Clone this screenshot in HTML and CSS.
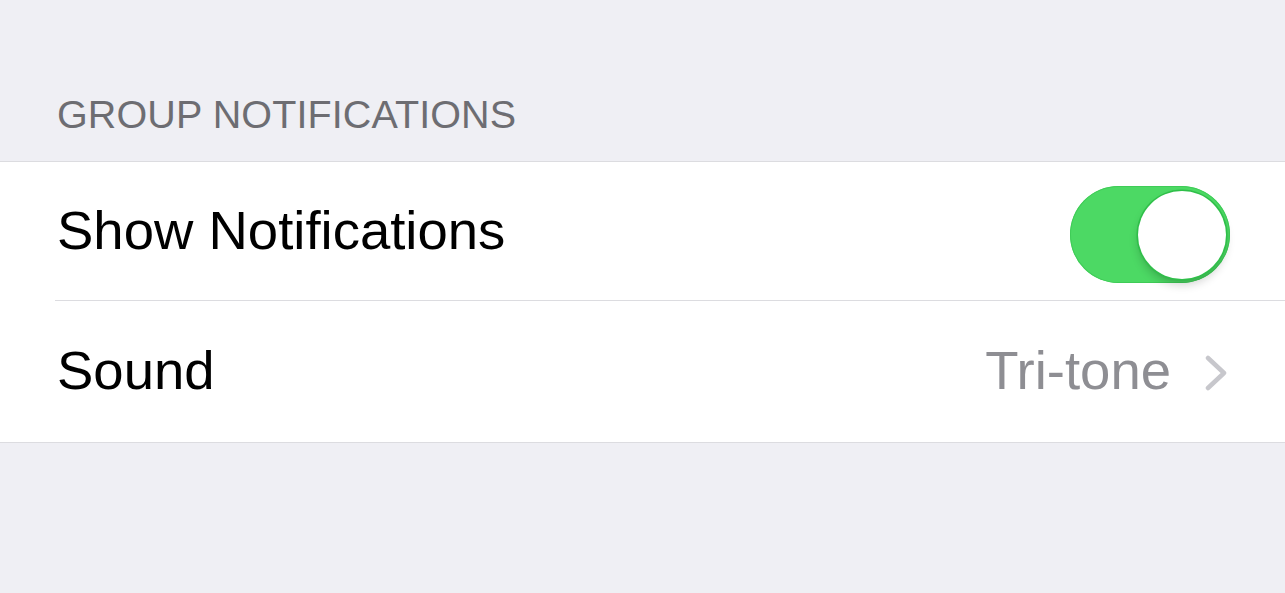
FILE: index.html
```html
<!DOCTYPE html>
<html lang="en">
<head>
<meta charset="utf-8">
<title>Group Notifications</title>
<link rel="stylesheet" href="styles.css">
</head>
<body>
  <div class="page">
    <div class="section-header">GROUP NOTIFICATIONS</div>
    <div class="group">
      <div class="row row-first">
        <span class="label">Show Notifications</span>
        <div class="toggle on"><span class="knob"></span></div>
      </div>
      <div class="row row-last">
        <span class="label">Sound</span>
        <span class="detail">
          <span class="value">Tri-tone</span>
          <svg class="chevron" width="24" height="36" viewBox="0 0 24 36" aria-hidden="true">
            <polyline points="4,3 20,18 4,33" fill="none" stroke="#c7c7cc" stroke-width="4.5" stroke-linecap="round" stroke-linejoin="round"/>
          </svg>
        </span>
      </div>
    </div>
  </div>
</body>
</html>
```

FILE: styles.css
```css
html, body {
  margin: 0;
  padding: 0;
  background: #efeff4;
}

.page {
  width: 1285px;
  height: 593px;
  overflow: hidden;
  background: #efeff4;
  font-family: "Liberation Sans", Arial, sans-serif;
}

.section-header {
  padding: 90px 57px 23px;
  font-size: 39.5px;
  line-height: 48px;
  color: #6d6d72;
  letter-spacing: 0.1px;
}

.group {
  background: #ffffff;
  border-top: 1px solid #dcdce0;
  border-bottom: 1px solid #dcdce0;
}

.row {
  display: flex;
  align-items: center;
  justify-content: space-between;
  margin-left: 55px;
  padding-left: 2px;
  padding-right: 55px;
}

.row-first {
  height: 138px;
  border-bottom: 1px solid #dcdce0;
}

.row-last {
  height: 141px;
}

.label {
  font-size: 54.5px;
  line-height: 1;
  color: #000000;
}

.toggle {
  position: relative;
  width: 160px;
  height: 97px;
  border-radius: 49px;
  background: #4cd964;
  margin-top: 6px;
  box-shadow: inset 0 0 0 1px #3fcc57;
}

.knob {
  position: absolute;
  top: 5px;
  right: 4px;
  width: 88px;
  height: 88px;
  border-radius: 50%;
  background: #ffffff;
  box-shadow: 0 0 0 1.5px #2fbf49, 0 6px 10px rgba(0, 0, 0, 0.18), 0 2px 3px rgba(0, 0, 0, 0.08);
}

.detail {
  display: flex;
  align-items: center;
  gap: 33px;
  margin-right: 2px;
}

.value {
  font-size: 54.5px;
  line-height: 1;
  color: #8e8e93;
}

.chevron {
  display: block;
  margin-top: 2px;
}
```
